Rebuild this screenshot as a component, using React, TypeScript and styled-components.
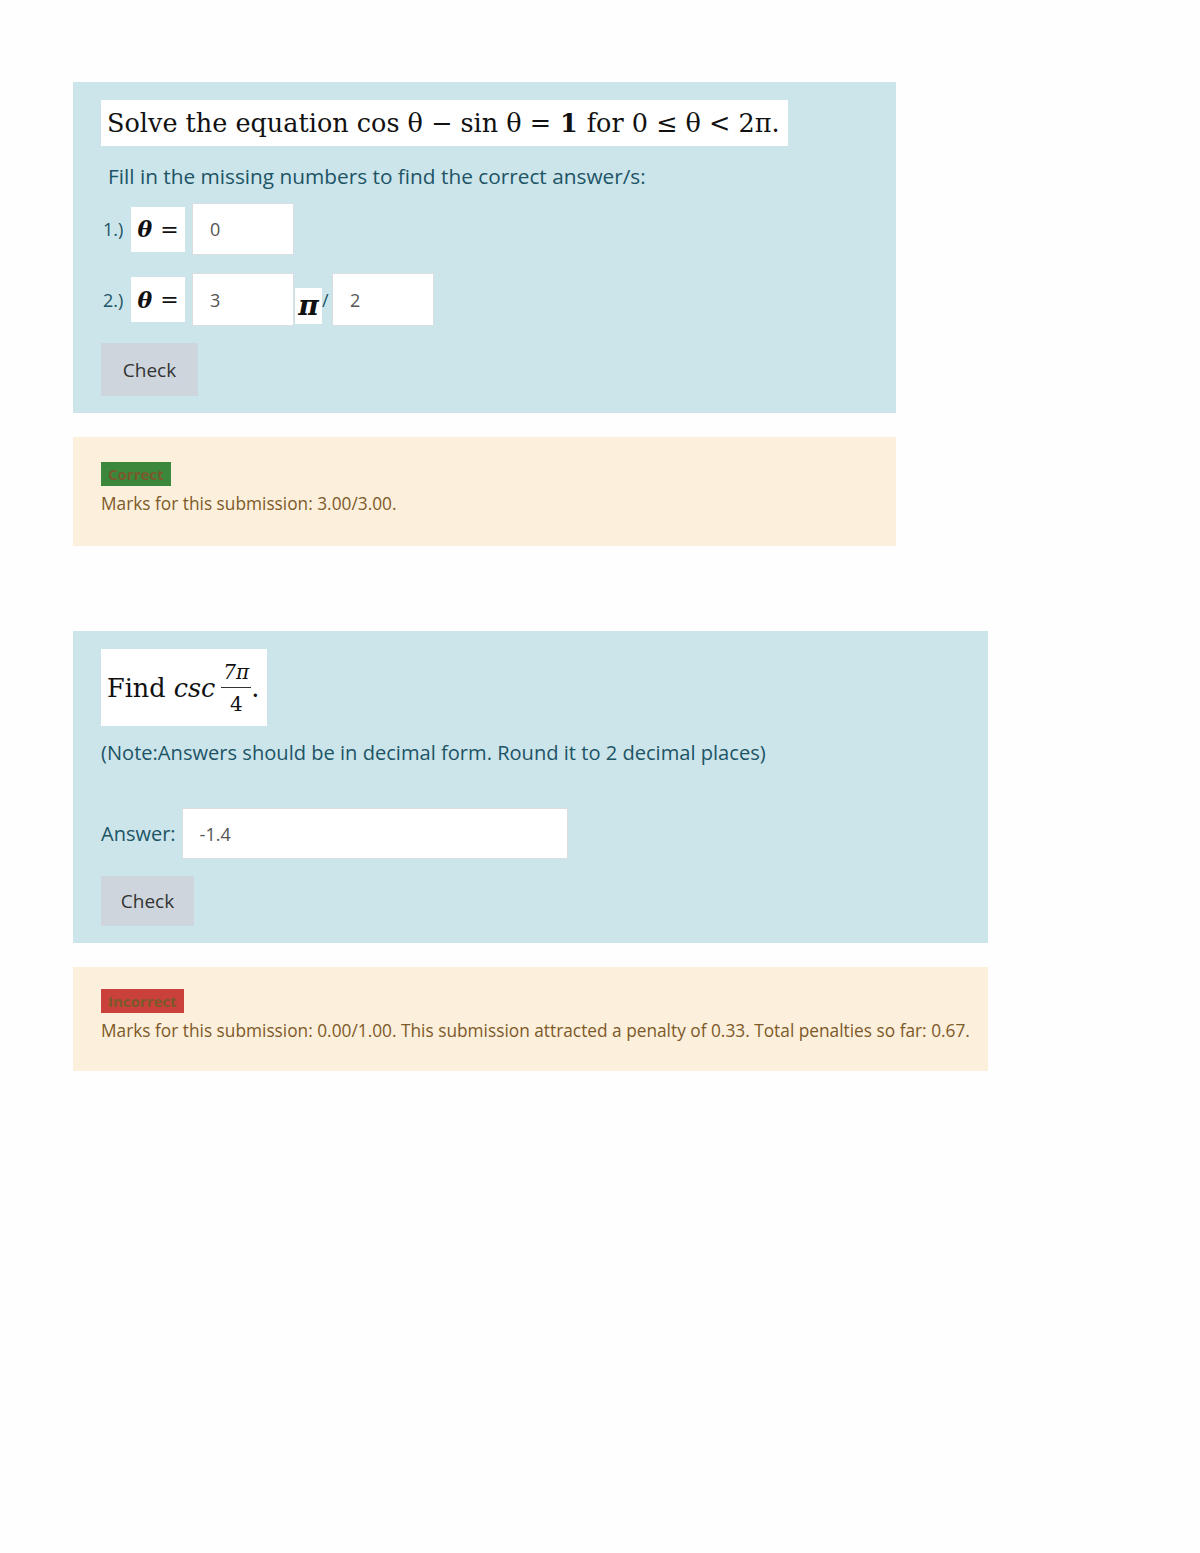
import styled, { createGlobalStyle } from 'styled-components';

const GlobalStyle = createGlobalStyle`
  html, body {
    margin: 0;
    padding: 0;
    background: #fefefe;
  }
  body {
    font-family: 'Open Sans', 'Noto Sans', sans-serif;
  }
`;

const Page = styled.div`
  padding: 82px 0 0 73px;
  min-height: 1553px;
  box-sizing: border-box;
`;

const Formulation = styled.div<{ $width: number }>`
  width: ${(p) => p.$width}px;
  box-sizing: border-box;
  background: #cce5ea;
  color: #1d5466;
  padding: 18px 28px 17px 28px;
  font-size: 18px;
`;

const MathBox = styled.div<{ $height: number }>`
  display: inline-flex;
  align-items: center;
  height: ${(p) => p.$height}px;
  background: #ffffff;
  padding: 0 8px 0 6px;
  font-family: 'DejaVu Serif', 'Liberation Serif', serif;
  font-size: 25.5px;
  color: #111;
  white-space: nowrap;
`;

const Bold = styled.span`
  font-weight: bold;
`;

const Italic = styled.span`
  font-style: italic;
`;

const Fraction = styled.span`
  display: inline-flex;
  flex-direction: column;
  align-items: center;
  font-size: 20px;
  line-height: 1;
  margin-left: 6px;
  span:first-child {
    font-style: italic;
    padding: 0 2px 5px;
    border-bottom: 1px solid #333;
  }
  span:last-child {
    padding-top: 6px;
  }
`;

const Prompt = styled.p<{ $top: number; $left: number; $size: number }>`
  margin: ${(p) => p.$top}px 0 0 ${(p) => p.$left}px;
  font-size: ${(p) => p.$size}px;
  line-height: 24px;
  white-space: nowrap;
`;

const AnswerRow = styled.div<{ $top: number }>`
  display: flex;
  align-items: center;
  margin-top: ${(p) => p.$top}px;
`;

const RowNum = styled.span`
  width: 28px;
  margin-left: 2px;
`;

const Symbol = styled.span<{ $w: number; $h: number; $size: number }>`
  display: inline-flex;
  align-items: center;
  justify-content: center;
  width: ${(p) => p.$w}px;
  height: ${(p) => p.$h}px;
  background: #fff;
  font-family: 'DejaVu Serif', 'Liberation Serif', serif;
  font-style: italic;
  font-weight: 600;
  font-size: ${(p) => p.$size}px;
  color: #111;
`;

const Equals = styled.span`
  font-style: normal;
  font-weight: normal;
  margin-left: 8px;
`;

const Field = styled.div<{ $w: number; $h: number }>`
  box-sizing: border-box;
  width: ${(p) => p.$w}px;
  height: ${(p) => p.$h}px;
  background: #fff;
  border: 1px solid #d9dee2;
  display: flex;
  align-items: center;
  padding-left: 17px;
  color: #555;
  font-size: 18px;
`;

const Slash = styled.span`
  width: 10px;
  text-align: left;
  font-size: 18px;
`;

const Label = styled.span`
  font-size: 20px;
  margin-right: 6px;
`;

const CheckButton = styled.button<{ $w: number; $h: number; $top: number }>`
  display: block;
  width: ${(p) => p.$w}px;
  height: ${(p) => p.$h}px;
  margin-top: ${(p) => p.$top}px;
  background: #ced5dc;
  border: none;
  font-family: 'Open Sans', 'Noto Sans', sans-serif;
  font-size: 19px;
  color: #333;
  padding: 0;
`;

const Outcome = styled.div<{ $width: number; $pad: number; $bottom: number }>`
  width: ${(p) => p.$width}px;
  box-sizing: border-box;
  background: #fcefdc;
  color: #7d5a29;
  padding: ${(p) => p.$pad}px 28px ${(p) => p.$bottom}px;
  font-size: 17.3px;
`;

const Badge = styled.span<{ $bg: string }>`
  display: inline-block;
  background: ${(p) => p.$bg};
  color: #7a5a2a;
  font-weight: bold;
  font-size: 15px;
  line-height: 24px;
  padding: 0 7px;
`;

const Marks = styled.div`
  margin-top: 5px;
  line-height: 26px;
  white-space: nowrap;
`;

const Spacer = styled.div<{ $h: number }>`
  height: ${(p) => p.$h}px;
`;

export default function App() {
  return (
    <>
      <GlobalStyle />
      <Page>
        <Formulation $width={823}>
          <MathBox $height={46}>
            Solve the equation cos θ − sin θ = <Bold>&nbsp;1&nbsp;</Bold>for 0 ≤ θ &lt; 2π.
          </MathBox>
          <Prompt $top={18} $left={7} $size={20.8}>
            Fill in the missing numbers to find the correct answer/s:
          </Prompt>
          <AnswerRow $top={15}>
            <RowNum>1.)</RowNum>
            <Symbol $w={54} $h={45} $size={22}>θ<Equals>=</Equals></Symbol>
            <Field $w={102} $h={52} style={{ marginLeft: 7 }}>0</Field>
          </AnswerRow>
          <AnswerRow $top={18}>
            <RowNum>2.)</RowNum>
            <Symbol $w={54} $h={45} $size={22}>θ<Equals>=</Equals></Symbol>
            <Field $w={102} $h={53} style={{ marginLeft: 7 }}>3</Field>
            <Symbol $w={27} $h={36} $size={28} style={{ marginLeft: 1, marginTop: 12 }}>π</Symbol>
            <Slash>/</Slash>
            <Field $w={102} $h={53}>2</Field>
          </AnswerRow>
          <CheckButton $w={97} $h={53} $top={17}>Check</CheckButton>
        </Formulation>

        <Spacer $h={24} />

        <Outcome $width={823} $pad={25} $bottom={29}>
          <Badge $bg="#3b873b">Correct</Badge>
          <Marks>Marks for this submission: 3.00/3.00.</Marks>
        </Outcome>

        <Spacer $h={85} />

        <Formulation $width={915}>
          <MathBox $height={77}>
            Find&nbsp;<Italic>csc</Italic>
            <Fraction>
              <span>7π</span>
              <span>4</span>
            </Fraction>
            .
          </MathBox>
          <Prompt $top={15} $left={0} $size={20.1}>
            (Note:Answers should be in decimal form. Round it to 2 decimal places)
          </Prompt>
          <AnswerRow $top={43}>
            <Label>Answer:</Label>
            <Field $w={386} $h={51}>-1.4</Field>
          </AnswerRow>
          <CheckButton $w={93} $h={50} $top={17}>Check</CheckButton>
        </Formulation>

        <Spacer $h={24} />

        <Outcome $width={915} $pad={22} $bottom={27}>
          <Badge $bg="#c9413a">Incorrect</Badge>
          <Marks>
            Marks for this submission: 0.00/1.00. This submission attracted a penalty of 0.33. Total penalties so far: 0.67.
          </Marks>
        </Outcome>
      </Page>
    </>
  );
}
